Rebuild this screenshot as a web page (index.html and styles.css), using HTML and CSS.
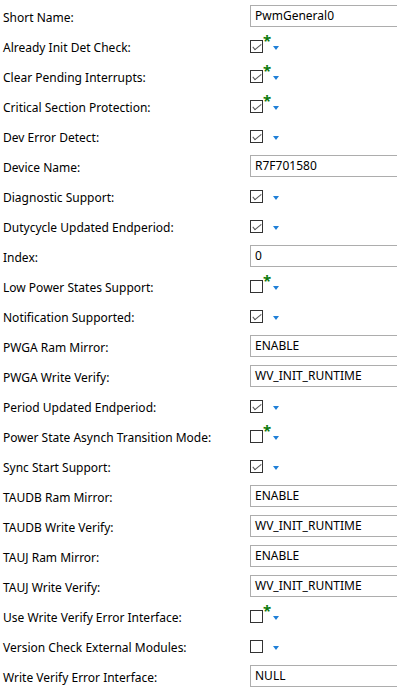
FILE: index.html
```html
<!DOCTYPE html>
<html>
<head>
<meta charset="utf-8">
<link rel="stylesheet" href="styles.css">
</head>
<body>
<div class="form">
  <div class="row"><div class="label">Short Name:</div><div class="input">PwmGeneral0</div></div>
  <div class="row"><div class="label">Already Init Det Check:</div><div class="ctl"><span class="cb on"></span><span class="star">*</span><span class="tri"></span></div></div>
  <div class="row"><div class="label">Clear Pending Interrupts:</div><div class="ctl"><span class="cb on"></span><span class="star">*</span><span class="tri"></span></div></div>
  <div class="row"><div class="label">Critical Section Protection:</div><div class="ctl"><span class="cb on"></span><span class="star">*</span><span class="tri"></span></div></div>
  <div class="row"><div class="label">Dev Error Detect:</div><div class="ctl"><span class="cb on"></span><span class="nostar"></span><span class="tri"></span></div></div>
  <div class="row"><div class="label">Device Name:</div><div class="input">R7F701580</div></div>
  <div class="row"><div class="label">Diagnostic Support:</div><div class="ctl"><span class="cb on"></span><span class="nostar"></span><span class="tri"></span></div></div>
  <div class="row"><div class="label">Dutycycle Updated Endperiod:</div><div class="ctl"><span class="cb on"></span><span class="nostar"></span><span class="tri"></span></div></div>
  <div class="row"><div class="label">Index:</div><div class="input">0</div></div>
  <div class="row"><div class="label">Low Power States Support:</div><div class="ctl"><span class="cb"></span><span class="star">*</span><span class="tri"></span></div></div>
  <div class="row"><div class="label">Notification Supported:</div><div class="ctl"><span class="cb on"></span><span class="nostar"></span><span class="tri"></span></div></div>
  <div class="row"><div class="label">PWGA Ram Mirror:</div><div class="input">ENABLE</div></div>
  <div class="row"><div class="label">PWGA Write Verify:</div><div class="input">WV_INIT_RUNTIME</div></div>
  <div class="row"><div class="label">Period Updated Endperiod:</div><div class="ctl"><span class="cb on"></span><span class="nostar"></span><span class="tri"></span></div></div>
  <div class="row"><div class="label">Power State Asynch Transition Mode:</div><div class="ctl"><span class="cb"></span><span class="star">*</span><span class="tri"></span></div></div>
  <div class="row"><div class="label">Sync Start Support:</div><div class="ctl"><span class="cb on"></span><span class="nostar"></span><span class="tri"></span></div></div>
  <div class="row"><div class="label">TAUDB Ram Mirror:</div><div class="input">ENABLE</div></div>
  <div class="row"><div class="label">TAUDB Write Verify:</div><div class="input">WV_INIT_RUNTIME</div></div>
  <div class="row"><div class="label">TAUJ Ram Mirror:</div><div class="input">ENABLE</div></div>
  <div class="row"><div class="label">TAUJ Write Verify:</div><div class="input">WV_INIT_RUNTIME</div></div>
  <div class="row"><div class="label">Use Write Verify Error Interface:</div><div class="ctl"><span class="cb"></span><span class="star">*</span><span class="tri"></span></div></div>
  <div class="row"><div class="label">Version Check External Modules:</div><div class="ctl"><span class="cb"></span><span class="nostar"></span><span class="tri"></span></div></div>
  <div class="row"><div class="label">Write Verify Error Interface:</div><div class="input">NULL</div></div>
</div>
</body>
</html>
```
FILE: styles.css
```css
html, body {
  margin: 0;
  padding: 0;
  background: #ffffff;
  overflow: hidden;
}
body {
  font-family: "Noto Sans", "Open Sans", sans-serif;
  font-size: 12px;
  color: #000;
  width: 397px;
}
.form {
  display: flex;
  flex-direction: column;
  padding-top: 1px;
}
.row {
  display: flex;
  align-items: center;
  height: 30px;
}
.label {
  flex: none;
  width: 250px;
  box-sizing: border-box;
  padding-left: 3px;
  padding-top: 3px;
  white-space: nowrap;
}
.input {
  flex: 1;
  min-width: 0;
  height: 20px;
  border: 1px solid #adadad;
  border-right: none;
  padding-left: 4px;
  line-height: 20px;
  white-space: nowrap;
  overflow: hidden;
}
.ctl {
  display: flex;
  align-items: center;
  height: 20px;
}
.cb {
  width: 11px;
  height: 11px;
  border: 1px solid #333;
  position: relative;
  flex: none;
}
.cb.on::after {
  content: "";
  position: absolute;
  left: 2px;
  top: 1px;
  width: 7px;
  height: 3px;
  border-left: 1px solid #555;
  border-bottom: 1px solid #555;
  transform: translate(0, 2px) rotate(-40deg) scale(1.1, 1);
}
.star {
  color: #0c7a0c;
  font-weight: bold;
  font-size: 15px;
  width: 10px;
  align-self: flex-start;
  line-height: 12px;
  margin-top: -2px;
}
.nostar {
  width: 10px;
}
.tri {
  width: 0;
  height: 0;
  border-left: 3.5px solid transparent;
  border-right: 3.5px solid transparent;
  border-top: 4px solid #1e7fd8;
  margin-top: 3px;
}
```
